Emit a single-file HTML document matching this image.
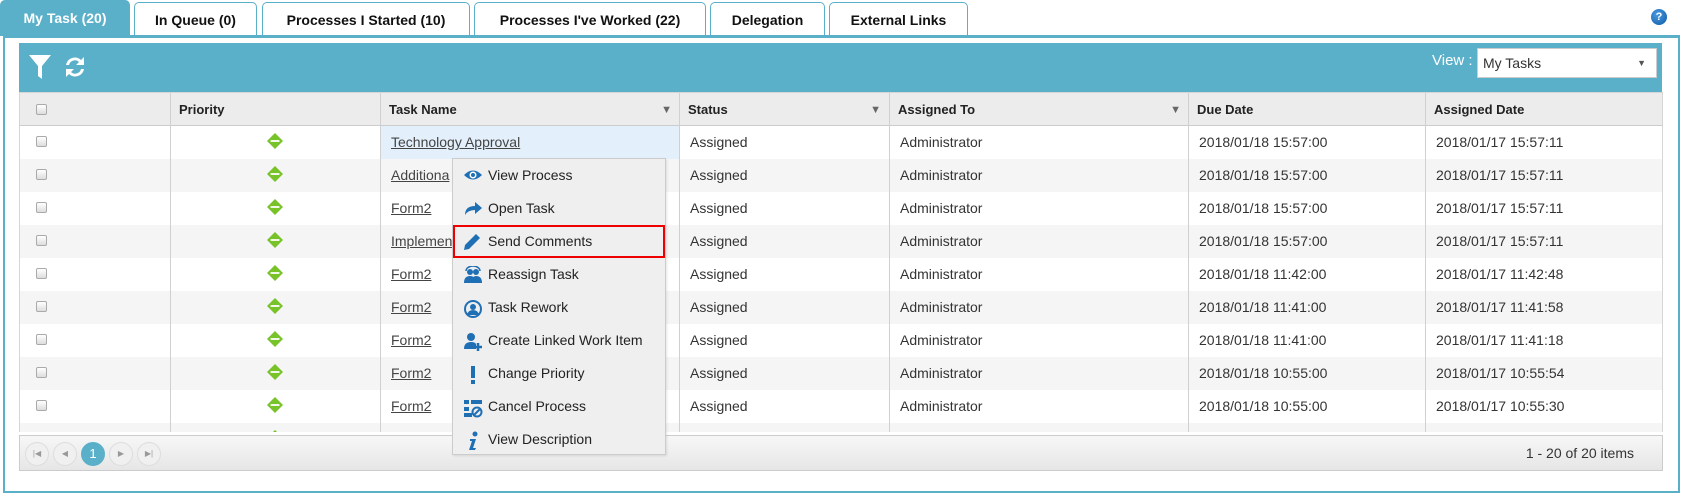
<!DOCTYPE html>
<html><head><meta charset="utf-8"><style>
*{box-sizing:border-box;margin:0;padding:0}
body{width:1682px;height:498px;background:#fff;font-family:"Liberation Sans",Arial,sans-serif;font-size:14px;color:#333;position:relative;overflow:hidden}
.a{position:absolute}
.tab{position:absolute;top:2px;height:34px;border:1px solid #5aafc9;border-bottom:none;border-radius:5px 5px 0 0;background:#fff;font-weight:bold;font-size:14px;color:#111;text-align:center;line-height:34px}
.tab.on{background:#5aafc9;color:#fff;top:0;height:36px}
.outer{left:3px;top:35px;width:1677px;height:458px;border:2px solid #5aafc9;border-top:3px solid #5aafc9}
.bar{left:19px;top:43px;width:1643px;height:49px;background:#5aafc9}
.hdr{left:19px;top:92px;width:1644px;height:34px;background:#ececec;border:1px solid #d5d5d5;border-bottom:1px solid #ccc}
.th{position:absolute;top:0;height:34px;line-height:34px;font-weight:bold;font-size:13px;color:#222;padding-left:8px;border-left:1px solid #d0d0d0}
.row{position:absolute;left:19px;width:1644px;height:33px;border-left:1px solid #d5d5d5;border-right:1px solid #d5d5d5}
.td{position:absolute;top:0;height:33px;line-height:33px;padding-left:10px;border-left:1px solid #d0d0d0;font-size:14px;color:#333}
.cb{position:absolute;left:16px;top:10px;width:11px;height:11px;border:1px solid #aaa;border-radius:2px;background:linear-gradient(#fff,#ddd)}
.lnk{text-decoration:underline;color:#444}
.menu{left:452px;top:158px;width:214px;height:297px;background:#efefef;border:1px solid #ccc;box-shadow:1px 1px 2px rgba(0,0,0,.1)}
.mi{position:absolute;left:0;width:212px;height:33px;line-height:33px;padding-left:35px;font-size:14px;color:#222}
.mi svg{position:absolute;left:10px;top:8px}
.pager{left:19px;top:435px;width:1644px;height:36px;background:linear-gradient(#f7f7f7,#e6e6e6);border:1px solid #ccc}
.pb{position:absolute;top:6px;width:24px;height:24px;border-radius:50%;border:1px solid #ddd;background:#f0f0f0;font-size:8px;color:#999;text-align:center;line-height:22px}
</style></head><body>
<div class="tab on" style="left:0;width:130px">My Task (20)</div>
<div class="tab" style="left:134px;width:123px">In Queue (0)</div>
<div class="tab" style="left:262px;width:208px">Processes I Started (10)</div>
<div class="tab" style="left:474px;width:232px">Processes I've Worked (22)</div>
<div class="tab" style="left:710px;width:115px">Delegation</div>
<div class="tab" style="left:829px;width:139px">External Links</div>
<div class="a" style="left:1651px;top:9px;width:16px;height:16px;border-radius:50%;background:radial-gradient(circle at 40% 35%,#4a9be0,#0d5aa8);color:#fff;font-weight:bold;font-size:11px;text-align:center;line-height:16px">?</div>
<div class="a outer"></div>
<div class="a bar">
 <svg class="a" style="left:10px;top:12px" width="22" height="24" viewBox="0 0 22 24"><path d="M0 0H22L13 11V24L9 21V11Z" fill="#fff"/></svg>
 <svg class="a" style="left:44px;top:11px" width="24" height="26" viewBox="0 0 24 26"><path d="M3 11A9 9 0 0 1 18 6L21 3V11H13L16 8A6 6 0 0 0 6 11Z M21 15A9 9 0 0 1 6 20L3 23V15H11L8 18A6 6 0 0 0 18 15Z" fill="#fff"/></svg>
 <div class="a" style="left:1413px;top:8px;color:#fff;font-size:15px;line-height:20px">View :</div>
 <div class="a" style="left:1458px;top:5px;width:180px;height:30px;background:#fff;border:1px solid #ccc;font-size:14px;line-height:28px;padding-left:5px">My Tasks<span class="a" style="right:10px;top:0;font-size:9px;color:#555">▼</span></div>
</div>
<div class="a hdr">
 <div class="cb" style="top:11px"></div>
 <div class="th" style="left:150px;width:210px">Priority</div>
 <div class="th" style="left:360px;width:300px">Task Name<span class="a" style="right:8px;top:0;color:#666;font-size:11px">▼</span></div>
 <div class="th" style="left:659px;width:210px">Status<span class="a" style="right:8px;top:0;color:#666;font-size:11px">▼</span></div>
 <div class="th" style="left:869px;width:300px">Assigned To<span class="a" style="right:8px;top:0;color:#666;font-size:11px">▼</span></div>
 <div class="th" style="left:1168px;width:238px">Due Date</div>
 <div class="th" style="left:1405px;width:238px">Assigned Date</div>
</div>
<div id="rows"></div>
<div class="a pager">
 <div class="pb" style="left:5px">|◀</div><div class="pb" style="left:33px">◀</div>
 <div class="pb" style="left:61px;background:#5aafc9;border-color:#5aafc9;color:#fff;font-size:13px">1</div>
 <div class="pb" style="left:89px">▶</div><div class="pb" style="left:117px">▶|</div>
 <div class="a" style="right:28px;top:0;line-height:34px;font-size:14px;color:#333">1 - 20 of 20 items</div>
</div>
<div class="a menu">
 <div class="mi" style="top:0"><svg width="20" height="16" viewBox="0 0 20 16"><path d="M1 8Q10 -1 19 8Q10 17 1 8Z" fill="#1f6fb5"/><circle cx="10" cy="8" r="3.5" fill="#fff"/><circle cx="10" cy="8" r="2" fill="#1f6fb5"/></svg>View Process</div>
 <div class="mi" style="top:33px"><svg width="20" height="16" viewBox="0 0 20 16"><path d="M2 15Q2 6 12 6V2L19 8L12 14V10Q5 10 2 15Z" fill="#1f6fb5"/></svg>Open Task</div>
 <div class="mi" style="top:66px;border:2px solid #e00;height:33px;line-height:29px;left:0;padding-left:33px"><svg style="left:8px;top:6px" width="20" height="18" viewBox="0 0 20 18"><path d="M1 17L2 12L13 1L17 5L6 16Z" fill="#1f6fb5"/></svg>Send Comments</div>
 <div class="mi" style="top:99px"><svg width="20" height="18" viewBox="0 0 20 18"><circle cx="7" cy="6" r="3" fill="#1f6fb5"/><circle cx="13" cy="6" r="3" fill="#1f6fb5"/><path d="M1 17Q1 10 7 10Q13 10 13 17ZM9 17Q9 10 13 10Q19 10 19 17Z" fill="#1f6fb5"/><path d="M3 5A7 5 0 0 1 17 5" stroke="#1f6fb5" fill="none" stroke-width="1.5"/></svg>Reassign Task</div>
 <div class="mi" style="top:132px"><svg width="20" height="20" viewBox="0 0 20 20"><circle cx="10" cy="10" r="9" fill="#1f6fb5"/><circle cx="10" cy="10" r="7" fill="#efefef"/><circle cx="10" cy="8" r="3" fill="#1f6fb5"/><path d="M4 16Q5 11 10 11Q15 11 16 16Z" fill="#1f6fb5"/></svg>Task Rework</div>
 <div class="mi" style="top:165px"><svg width="20" height="20" viewBox="0 0 20 20"><circle cx="8" cy="5" r="4" fill="#1f6fb5"/><path d="M1 17Q1 10 8 10Q12 10 13 12V17Z" fill="#1f6fb5"/><path d="M15 11V19M11 15H19" stroke="#1f6fb5" stroke-width="2.5"/></svg>Create Linked Work Item</div>
 <div class="mi" style="top:198px"><svg width="20" height="20" viewBox="0 0 20 20"><rect x="8" y="1" width="4" height="12" fill="#1f6fb5"/><rect x="8" y="15" width="4" height="4" fill="#1f6fb5"/></svg>Change Priority</div>
 <div class="mi" style="top:231px"><svg width="20" height="20" viewBox="0 0 20 20"><rect x="1" y="2" width="5" height="4" fill="#1f6fb5"/><rect x="8" y="2" width="11" height="4" fill="#1f6fb5"/><rect x="1" y="9" width="5" height="4" fill="#1f6fb5"/><rect x="1" y="15" width="8" height="4" fill="#1f6fb5"/><circle cx="14" cy="14" r="4.5" fill="none" stroke="#1f6fb5" stroke-width="2"/><path d="M11 17L17 11" stroke="#1f6fb5" stroke-width="2"/></svg>Cancel Process</div>
 <div class="mi" style="top:264px"><svg width="20" height="20" viewBox="0 0 20 20"><circle cx="12" cy="3" r="2.5" fill="#1f6fb5"/><path d="M7 8H13L10 17H13L12 19H6L9 10H7Z" fill="#1f6fb5"/></svg>View Description</div>
</div>
<script>
(function(){
var names=["Technology Approval","Additiona","Form2","Implemen","Form2","Form2","Form2","Form2","Form2",""];
var due=["2018/01/18 15:57:00","2018/01/18 15:57:00","2018/01/18 15:57:00","2018/01/18 15:57:00","2018/01/18 11:42:00","2018/01/18 11:41:00","2018/01/18 11:41:00","2018/01/18 10:55:00","2018/01/18 10:55:00",""];
var as=["2018/01/17 15:57:11","2018/01/17 15:57:11","2018/01/17 15:57:11","2018/01/17 15:57:11","2018/01/17 11:42:48","2018/01/17 11:41:58","2018/01/17 11:41:18","2018/01/17 10:55:54","2018/01/17 10:55:30",""];
var h="";
for(var i=0;i<10;i++){
 var yy=126+i*33, ht=i==9?9:33;
 var bg=i%2?"#f5f5f5":"#fff";
 var dia='<svg class="a" style="left:96px;top:7px" width="16" height="16" viewBox="0 0 18 18"><path d="M9 0L18 9L9 18L0 9Z" fill="#78c22a"/><path d="M4 9H14" stroke="#fff" stroke-width="2"/></svg>';
 h+='<div class="row" style="top:'+yy+'px;height:'+ht+'px;overflow:hidden;background:'+bg+'">'+
 '<div class="cb"></div>'+
 '<div class="td" style="left:150px;width:210px">'+dia+'</div>'+
 '<div class="td" style="left:360px;width:300px;'+(i==0?'background:#e3effb;':'')+'"><span class="lnk">'+names[i]+'</span></div>'+
 '<div class="td" style="left:659px;width:210px">'+(i<9?'Assigned':'')+'</div>'+
 '<div class="td" style="left:869px;width:300px">'+(i<9?'Administrator':'')+'</div>'+
 '<div class="td" style="left:1168px;width:238px">'+due[i]+'</div>'+
 '<div class="td" style="left:1405px;width:238px">'+as[i]+'</div></div>';
}
document.getElementById("rows").innerHTML=h;
})();
</script>
</body></html>
